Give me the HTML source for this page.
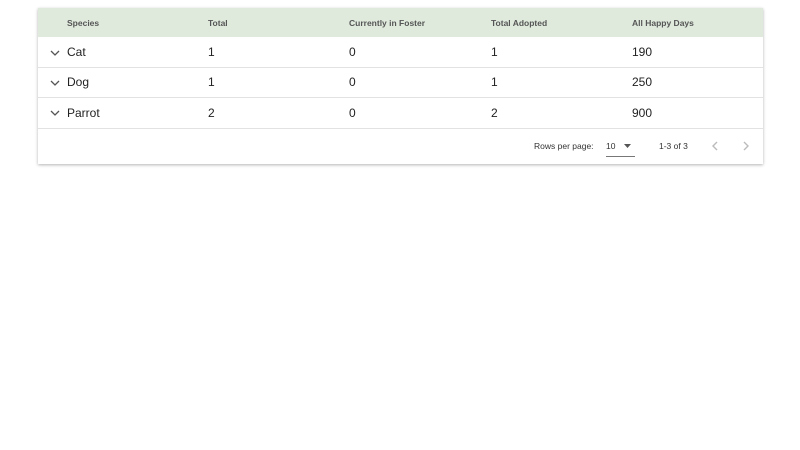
<!DOCTYPE html><html><head><style>
body{margin:0;background:#fff;font-family:"Liberation Sans",sans-serif;}
.t{position:absolute;left:38px;top:8px;width:725px;height:156px;background:#fff;box-shadow:0 1px 3px rgba(0,0,0,.3);}
.h{position:absolute;left:0;top:0;width:725px;height:29px;background:#dfeadd;}
.c{position:absolute;font-size:12px;color:#222;}
.hc{position:absolute;font-size:8.5px;font-weight:bold;color:#555;top:10px;}
.r{position:absolute;left:0;width:725px;height:1px;background:#e2e2e2;}
.f{position:absolute;font-size:8.5px;color:#333;}
</style></head><body><div class="t">
<div class="h"></div>
<div class="hc" style="left:29px">Species</div><div class="hc" style="left:170px">Total</div><div class="hc" style="left:311px">Currently in Foster</div><div class="hc" style="left:453px">Total Adopted</div><div class="hc" style="left:594px">All Happy Days</div>
<div class="r" style="top:59px"></div><div class="r" style="top:89px"></div><div class="r" style="top:120px"></div>
<svg style="position:absolute;left:12px;top:40px" width="10" height="10"><path d="M1 3l4 4 4-4" stroke="#555" stroke-width="1.3" fill="none"/></svg>
<svg style="position:absolute;left:12px;top:70px" width="10" height="10"><path d="M1 3l4 4 4-4" stroke="#555" stroke-width="1.3" fill="none"/></svg>
<svg style="position:absolute;left:12px;top:100px" width="10" height="10"><path d="M1 3l4 4 4-4" stroke="#555" stroke-width="1.3" fill="none"/></svg>
<div class="c" style="left:29px;top:37px">Cat</div><div class="c" style="left:170px;top:37px">1</div><div class="c" style="left:311px;top:37px">0</div><div class="c" style="left:453px;top:37px">1</div><div class="c" style="left:594px;top:37px">190</div>
<div class="c" style="left:29px;top:67px">Dog</div><div class="c" style="left:170px;top:67px">1</div><div class="c" style="left:311px;top:67px">0</div><div class="c" style="left:453px;top:67px">1</div><div class="c" style="left:594px;top:67px">250</div>
<div class="c" style="left:29px;top:98px">Parrot</div><div class="c" style="left:170px;top:98px">2</div><div class="c" style="left:311px;top:98px">0</div><div class="c" style="left:453px;top:98px">2</div><div class="c" style="left:594px;top:98px">900</div>
<div class="f" style="left:496px;top:133px">Rows per page:</div>
<div class="f" style="left:568px;top:133px">10</div>
<svg style="position:absolute;left:585px;top:135px" width="10" height="6"><path d="M1 1h7l-3.5 4z" fill="#555"/></svg>
<div style="position:absolute;left:568px;top:148px;width:29px;height:1px;background:#777"></div>
<div class="f" style="left:621px;top:133px">1-3 of 3</div>
<svg style="position:absolute;left:672px;top:132px" width="10" height="12"><path d="M7 2l-4 4 4 4" stroke="#bbb" stroke-width="1.4" fill="none"/></svg>
<svg style="position:absolute;left:703px;top:132px" width="10" height="12"><path d="M3 2l4 4-4 4" stroke="#bbb" stroke-width="1.4" fill="none"/></svg>
</div></body></html>
